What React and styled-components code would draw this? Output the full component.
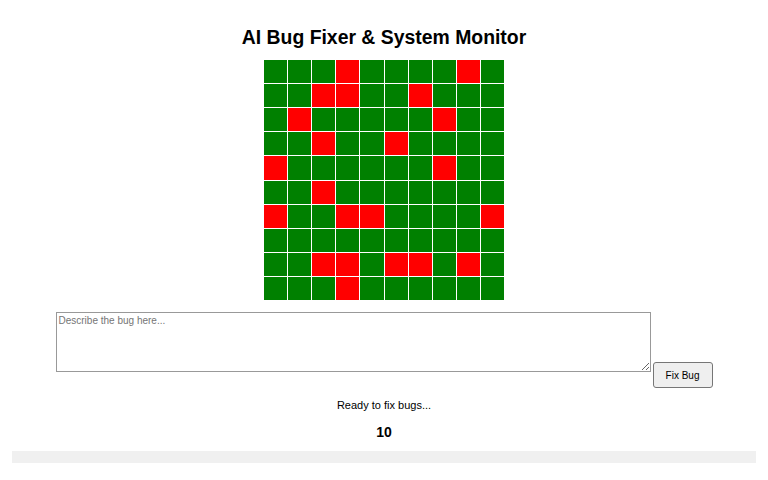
import React, { useState } from 'react';
import styled, { createGlobalStyle } from 'styled-components';

const GlobalStyle = createGlobalStyle`
  html, body {
    margin: 0;
    padding: 0;
    background: #ffffff;
    font-family: "Liberation Sans", Arial, sans-serif;
    color: #000000;
  }
`;

// 1 = bug (red), 0 = healthy (green)
const gridData = [
  [0, 0, 0, 1, 0, 0, 0, 0, 1, 0],
  [0, 0, 1, 1, 0, 0, 1, 0, 0, 0],
  [0, 1, 0, 0, 0, 0, 0, 1, 0, 0],
  [0, 0, 1, 0, 0, 1, 0, 0, 0, 0],
  [1, 0, 0, 0, 0, 0, 0, 1, 0, 0],
  [0, 0, 1, 0, 0, 0, 0, 0, 0, 0],
  [1, 0, 0, 1, 1, 0, 0, 0, 0, 1],
  [0, 0, 0, 0, 0, 0, 0, 0, 0, 0],
  [0, 0, 1, 1, 0, 1, 1, 0, 1, 0],
  [0, 0, 0, 1, 0, 0, 0, 0, 0, 0],
];

const App = () => {
  const [text, setText] = useState('');
  const [score] = useState(10);

  return (
    <Page>
      <GlobalStyle />
      <Title>AI Bug Fixer &amp; System Monitor</Title>
      <Grid>
        {gridData.map((row, r) =>
          row.map((cell, c) => <Cell key={`${r}-${c}`} $bug={cell === 1} />)
        )}
      </Grid>
      <InputRow>
        <BugInput
          placeholder="Describe the bug here..."
          value={text}
          onChange={(e) => setText(e.target.value)}
        />
        <FixButton>Fix Bug</FixButton>
      </InputRow>
      <Status>Ready to fix bugs...</Status>
      <Counter>{score}</Counter>
      <Monitor />
    </Page>
  );
};

const Page = styled.div`
  width: 744px;
  margin: 0 12px;
  display: flex;
  flex-direction: column;
  align-items: center;
`;

const Title = styled.h1`
  font-size: 19.4px;
  line-height: 24px;
  font-weight: bold;
  margin: 25px 0 11px;
`;

const Grid = styled.div`
  width: 240px;
  height: 240px;
  display: grid;
  grid-template-columns: repeat(10, 1fr);
  grid-template-rows: repeat(10, 1fr);
  gap: 1px;
`;

const Cell = styled.div`
  background: ${(p) => (p.$bug ? '#ff0000' : '#008000')};
`;

const InputRow = styled.div`
  display: flex;
  align-items: flex-start;
  gap: 2px;
  margin-top: 12px;
`;

const BugInput = styled.textarea`
  box-sizing: border-box;
  width: 595px;
  height: 60px;
  padding: 2px;
  border: 1px solid #999999;
  font-family: "Liberation Sans", Arial, sans-serif;
  font-size: 10px;
  &::placeholder {
    color: #757575;
  }
`;

const FixButton = styled.button`
  box-sizing: border-box;
  width: 60px;
  height: 26px;
  margin-top: 50px;
  background: #efefef;
  border: 1px solid #767676;
  border-radius: 3px;
  font-family: "Liberation Sans", Arial, sans-serif;
  font-size: 10px;
  color: #000000;
`;

const Status = styled.p`
  font-size: 11px;
  line-height: 13px;
  margin: 11px 0 0;
`;

const Counter = styled.p`
  font-size: 14px;
  line-height: 17px;
  font-weight: bold;
  margin: 12px 0 0;
`;

const Monitor = styled.div`
  align-self: stretch;
  height: 12px;
  margin-top: 10px;
  background: #f0f0f0;
`;

export default App;
